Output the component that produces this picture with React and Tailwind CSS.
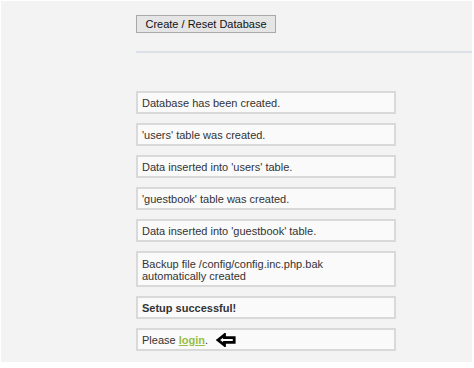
import React from "react";

const Box = ({ children, className = "" }) => (
  <div
    className={`w-[260px] border-2 border-[#d9d9d9] bg-[#fafafa] px-[4px] text-[11px] leading-[12px] text-[#333] ${className}`}
  >
    {children}
  </div>
);

export default function App() {
  return (
    <div
      className="h-[368px] w-[474px] bg-white"
      style={{ fontFamily: '"Liberation Sans", Arial, sans-serif' }}
    >
      <div className="ml-[1px] mt-[1px] h-[361px] w-[471px] bg-[#f3f3f3] pt-[14px] pl-[135px]">
        <button className="flex h-[18px] w-[140px] items-center justify-center border border-[#a9a9a9] bg-[#e5e5e5] text-[11px] leading-none text-[#111]">
          Create / Reset Database
        </button>
        <div className="mt-[18px] h-[2px] w-full bg-[#dce1e7]" />
        <div className="mt-[38px] flex flex-col gap-[9px]">
          <Box className="flex h-[23px] items-center">Database has been created.</Box>
          <Box className="flex h-[23px] items-center">&#39;users&#39; table was created.</Box>
          <Box className="flex h-[23px] items-center">Data inserted into &#39;users&#39; table.</Box>
          <Box className="flex h-[23px] items-center">&#39;guestbook&#39; table was created.</Box>
          <Box className="flex h-[23px] items-center">Data inserted into &#39;guestbook&#39; table.</Box>
          <Box className="h-[36px] pt-[5px]">
            Backup file /config/config.inc.php.bak
            <br />
            automatically created
          </Box>
          <Box className="flex h-[23px] items-center font-bold">Setup successful!</Box>
          <Box className="flex h-[23px] items-center">
            <span>Please </span>
            <a href="#" className="ml-[3px] font-bold text-[#95bf45] underline">login</a>
            <span>.</span>
            <svg width="20" height="14" viewBox="0 0 20 14" className="ml-[8px]">
              <path
                d="M2 7 L8.5 1.8 L8.5 4.6 L18.2 4.6 L18.2 9.4 L8.5 9.4 L8.5 12.2 Z"
                fill="none"
                stroke="#000"
                strokeWidth="2.8"
                strokeLinejoin="miter"
              />
            </svg>
          </Box>
        </div>
      </div>
    </div>
  );
}
